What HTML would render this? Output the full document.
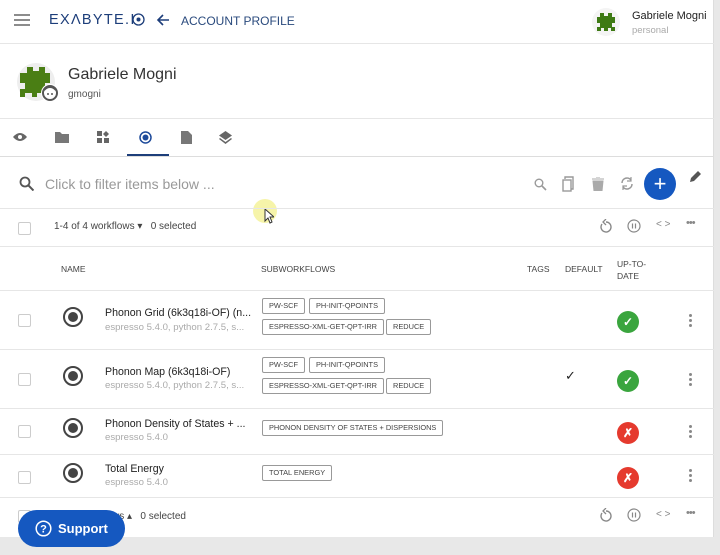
<!DOCTYPE html>
<html><head><style>
*{box-sizing:border-box;margin:0;padding:0}
body{width:720px;height:555px;overflow:hidden;font-family:"Liberation Sans",sans-serif;background:#e8e8e8;position:relative;color:#333}
.main{position:absolute;left:0;top:0;width:714px;height:537px;background:#fff;border-right:1px solid #ddd}
.abs{position:absolute}
.line{position:absolute;left:0;width:714px;height:1px;background:#e6e6e6}
.cb{position:absolute;left:18px;width:13px;height:13px;border:1px solid #ccc;border-radius:2px;background:#fff}
.tag{position:absolute;height:16px;border:1px solid #999;border-radius:2px;font-size:7.4px;color:#444;line-height:14px;padding:0 6px;white-space:nowrap}
.radio{position:absolute;left:63px;width:20px;height:20px;border:2px solid #444;border-radius:50%}
.radio:after{content:"";position:absolute;left:3px;top:3px;width:10px;height:10px;border-radius:50%;background:#444}
.t1{position:absolute;left:105px;font-size:10.6px;color:#222}
.t2{position:absolute;left:105px;font-size:9.6px;color:#aaa}
.st{position:absolute;left:617px;width:22px;height:22px;border-radius:50%;color:#fff;font-size:12px;font-weight:bold;text-align:center;line-height:22px}
.dots{position:absolute;left:689px;width:3px;font-size:0}
.dots i{display:block;width:3px;height:3px;border-radius:50%;background:#888;margin-bottom:2px}
.hd{position:absolute;font-size:8.5px;color:#444}
</style></head><body>
<div class="main">
<svg class="abs" style="left:14px;top:14px" width="16" height="12"><path d="M0 1h16M0 6h16M0 11h16" stroke="#666" stroke-width="1.6"/></svg>
<div class="abs" style="left:49px;top:12px;font-size:14.5px;letter-spacing:1.3px;color:#1d3e7a">EXΛBYTE.I</div>
<svg class="abs" style="left:132px;top:13px" width="13" height="13"><circle cx="6.5" cy="6.5" r="5.5" fill="none" stroke="#1d3e7a" stroke-width="1.3"/><circle cx="6.5" cy="6.5" r="2" fill="#1d3e7a"/></svg>
<svg class="abs" style="left:156px;top:13px" width="14" height="14"><path d="M13 7H2M7 2L2 7l5 5" fill="none" stroke="#1d3e7a" stroke-width="1.6"/></svg>
<div class="abs" style="left:181px;top:14px;font-size:12px;color:#2a4a7d">ACCOUNT PROFILE</div>
<svg class="abs" style="left:592px;top:8px" width="28" height="28"><circle cx="14" cy="14" r="14" fill="#f4f4f4"/><path d="M8 5h4v3h4V5h4v4h3v6h-3v4h3v4h-4v-3h-3v3h-4v-3H9v3H5v-4h3v-4H5V9h3z" fill="#3e7a14"/></svg>
<div class="abs" style="left:632px;top:10px;font-size:11px;color:#222">Gabriele Mogni</div>
<div class="abs" style="left:632px;top:25px;font-size:9.5px;color:#aaa">personal</div>
<div class="line" style="top:43px"></div>
<svg class="abs" style="left:17px;top:63px" width="42" height="40"><circle cx="19" cy="19" r="19" fill="#eee"/><path d="M10 4h6v4h6V4h6v6h5v10h-5v6h5v8h-8v-4h-5v4h-5v-4H8v4H3v-8h5v-6H3V10h7z" fill="#4a7e14"/><circle cx="33" cy="30" r="9" fill="#fff"/><circle cx="33" cy="30" r="7" fill="none" stroke="#555" stroke-width="2"/><path d="M27 27q6-6 12 0" stroke="#555" stroke-width="2" fill="none"/><circle cx="31" cy="31" r="1" fill="#555"/><circle cx="35" cy="31" r="1" fill="#555"/></svg>
<div class="abs" style="left:68px;top:66px;font-size:16px;color:#333">Gabriele Mogni</div>
<div class="abs" style="left:68px;top:89px;font-size:10px;color:#555">gmogni</div>
<div class="line" style="top:118px"></div>
<svg class="abs" style="left:13px;top:132px" width="14" height="10"><path d="M0 5q7-8 14 0q-7 8-14 0z" fill="#666"/><circle cx="7" cy="5" r="2" fill="#fff"/></svg>
<svg class="abs" style="left:55px;top:131px" width="14" height="12"><path d="M0 1h5l2 2h7v9H0z" fill="#777"/></svg>
<svg class="abs" style="left:97px;top:131px" width="14" height="13"><rect x="0" y="0" width="5" height="5" fill="#666"/><rect x="0" y="7" width="5" height="5" fill="#666"/><rect x="7" y="7" width="5" height="5" fill="#666"/><path d="M9 0l3 3-3 3-3-3z" fill="#666"/></svg>
<svg class="abs" style="left:139px;top:131px" width="13" height="13"><circle cx="6.5" cy="6.5" r="5.5" fill="none" stroke="#1d4a9a" stroke-width="1.5"/><circle cx="6.5" cy="6.5" r="3" fill="#1d4a9a"/></svg>
<div class="abs" style="left:127px;top:154px;width:42px;height:2px;background:#1d3e7a"></div>
<svg class="abs" style="left:181px;top:131px" width="11" height="13"><path d="M0 0h7l4 4v9H0z" fill="#777"/></svg>
<svg class="abs" style="left:219px;top:131px" width="13" height="13"><path d="M6.5 0L13 4.5 6.5 9 0 4.5z" fill="#666"/><path d="M1 7l5.5 4L12 7l1 1-6.5 5L0 8z" fill="#666"/></svg>
<div class="line" style="top:156px;background:#ddd"></div>
<svg class="abs" style="left:19px;top:176px" width="15" height="15"><circle cx="6" cy="6" r="4.5" fill="none" stroke="#555" stroke-width="1.8"/><path d="M9.5 9.5l5 5" stroke="#555" stroke-width="2"/></svg>
<div class="abs" style="left:45px;top:176px;font-size:14px;color:#999">Click to filter items below ...</div>
<div class="abs" style="left:253px;top:199px;width:24px;height:24px;border-radius:50%;background:#f5f3a0;opacity:.9"></div>
<svg class="abs" style="left:264px;top:208px" width="10" height="16"><path d="M1 1v12l3-3 2 5 2-1-2-5h4z" fill="#fff" stroke="#333" stroke-width="1"/></svg>
<svg class="abs" style="left:534px;top:178px" width="13" height="13"><circle cx="5" cy="5" r="3.8" fill="none" stroke="#999" stroke-width="1.4"/><path d="M8 8l4 4" stroke="#999" stroke-width="1.6"/></svg>
<svg class="abs" style="left:562px;top:176px" width="14" height="16"><path d="M3 3V1h8v12H9" fill="none" stroke="#999" stroke-width="1.4"/><rect x="1" y="4" width="8" height="11" fill="none" stroke="#999" stroke-width="1.4"/></svg>
<svg class="abs" style="left:592px;top:177px" width="12" height="14"><path d="M0 2h12M4 0h4M1 4h10l-1 10H2z" fill="#aaa" stroke="#aaa"/></svg>
<svg class="abs" style="left:620px;top:176px" width="14" height="15"><path d="M2 7a5 5 0 0 1 9-3M12 8a5 5 0 0 1-9 3" fill="none" stroke="#999" stroke-width="1.5"/><path d="M11 1v4H7M3 14v-4h4" fill="none" stroke="#999" stroke-width="1.2"/></svg>
<div class="abs" style="left:644px;top:168px;width:32px;height:32px;border-radius:50%;background:#1558c0;color:#fff;font-size:22px;text-align:center;line-height:31px">+</div>
<svg class="abs" style="left:689px;top:170px" width="13" height="13"><path d="M1 12l1-4 7-7 3 3-7 7z" fill="#555"/></svg>
<div class="line" style="top:208px"></div>
<div class="cb" style="top:222px"></div>
<div class="abs" style="left:54px;top:221px;font-size:10px;color:#444">1-4 of 4 workflows ▾ &nbsp;&nbsp;0 selected</div>
<svg class="abs" style="left:599px;top:219px" width="13" height="14"><path d="M3 5a5 5 0 1 0 4-2" fill="none" stroke="#888" stroke-width="1.4"/><path d="M7 0L4 3l3 3" fill="none" stroke="#888" stroke-width="1.3"/></svg>
<svg class="abs" style="left:627px;top:219px" width="14" height="14"><circle cx="7" cy="7" r="6" fill="none" stroke="#888" stroke-width="1.2"/><path d="M5.5 4.5v5M8.5 4.5v5" stroke="#888" stroke-width="1.2"/></svg>
<div class="abs" style="left:656px;top:219px;font-size:10px;color:#888">&lt; &gt;</div>
<div class="abs" style="left:686px;top:217px;font-size:11px;color:#888;letter-spacing:-1px">•••</div>
<div class="line" style="top:246px"></div>
<div class="hd" style="left:61px;top:264px">NAME</div>
<div class="hd" style="left:261px;top:264px">SUBWORKFLOWS</div>
<div class="hd" style="left:527px;top:264px">TAGS</div>
<div class="hd" style="left:565px;top:264px">DEFAULT</div>
<div class="hd" style="left:617px;top:258px;line-height:12px">UP-TO-<br>DATE</div>
<div class="line" style="top:290px"></div>
<div class="cb" style="top:314px"></div>
<div class="radio" style="top:307px"></div>
<div class="t1" style="top:307px">Phonon Grid (6k3q18i-OF) (n...</div>
<div class="t2" style="top:322px">espresso 5.4.0, python 2.7.5, s...</div>
<div class="tag" style="left:262px;top:298px">PW-SCF</div>
<div class="tag" style="left:309px;top:298px">PH-INIT-QPOINTS</div>
<div class="tag" style="left:262px;top:319px">ESPRESSO-XML-GET-QPT-IRR</div>
<div class="tag" style="left:386px;top:319px">REDUCE</div>
<div class="st" style="top:311px;background:#3aa53e">✓</div>
<div class="dots" style="top:314px"><i></i><i></i><i></i></div>
<div class="line" style="top:349px"></div>
<div class="cb" style="top:373px"></div>
<div class="radio" style="top:366px"></div>
<div class="t1" style="top:366px">Phonon Map (6k3q18i-OF)</div>
<div class="t2" style="top:380px">espresso 5.4.0, python 2.7.5, s...</div>
<div class="tag" style="left:262px;top:357px">PW-SCF</div>
<div class="tag" style="left:309px;top:357px">PH-INIT-QPOINTS</div>
<div class="tag" style="left:262px;top:378px">ESPRESSO-XML-GET-QPT-IRR</div>
<div class="tag" style="left:386px;top:378px">REDUCE</div>
<div class="abs" style="left:565px;top:368px;font-size:13px;color:#222">✓</div>
<div class="st" style="top:370px;background:#3aa53e">✓</div>
<div class="dots" style="top:373px"><i></i><i></i><i></i></div>
<div class="line" style="top:408px"></div>
<div class="cb" style="top:425px"></div>
<div class="radio" style="top:418px"></div>
<div class="t1" style="top:418px">Phonon Density of States + ...</div>
<div class="t2" style="top:432px">espresso 5.4.0</div>
<div class="tag" style="left:262px;top:420px">PHONON DENSITY OF STATES + DISPERSIONS</div>
<div class="st" style="top:422px;background:#e53a2e">✗</div>
<div class="dots" style="top:425px"><i></i><i></i><i></i></div>
<div class="line" style="top:454px"></div>
<div class="cb" style="top:471px"></div>
<div class="radio" style="top:463px"></div>
<div class="t1" style="top:463px">Total Energy</div>
<div class="t2" style="top:477px">espresso 5.4.0</div>
<div class="tag" style="left:262px;top:465px">TOTAL ENERGY</div>
<div class="st" style="top:467px;background:#e53a2e">✗</div>
<div class="dots" style="top:469px"><i></i><i></i><i></i></div>
<div class="line" style="top:497px"></div>
<div class="cb" style="top:510px"></div>
<div class="abs" style="left:112px;top:511px;font-size:10px;color:#444">ws ▴ &nbsp;&nbsp;0 selected</div>
<svg class="abs" style="left:599px;top:508px" width="13" height="14"><path d="M3 5a5 5 0 1 0 4-2" fill="none" stroke="#888" stroke-width="1.4"/><path d="M7 0L4 3l3 3" fill="none" stroke="#888" stroke-width="1.3"/></svg>
<svg class="abs" style="left:627px;top:508px" width="14" height="14"><circle cx="7" cy="7" r="6" fill="none" stroke="#888" stroke-width="1.2"/><path d="M5.5 4.5v5M8.5 4.5v5" stroke="#888" stroke-width="1.2"/></svg>
<div class="abs" style="left:656px;top:509px;font-size:10px;color:#888">&lt; &gt;</div>
<div class="abs" style="left:686px;top:507px;font-size:11px;color:#888;letter-spacing:-1px">•••</div>
</div>
<div class="abs" style="left:18px;top:510px;width:107px;height:37px;border-radius:19px;background:#1558c0;color:#fff;font-size:13px;font-weight:bold">
<svg class="abs" style="left:17px;top:10px" width="17" height="17"><circle cx="8.5" cy="8.5" r="7.3" fill="none" stroke="#fff" stroke-width="1.5"/><text x="8.5" y="12.5" font-size="11" font-weight="bold" fill="#fff" text-anchor="middle" font-family="Liberation Sans">?</text></svg>
<span class="abs" style="left:40px;top:11px">Support</span></div>
</body></html>
